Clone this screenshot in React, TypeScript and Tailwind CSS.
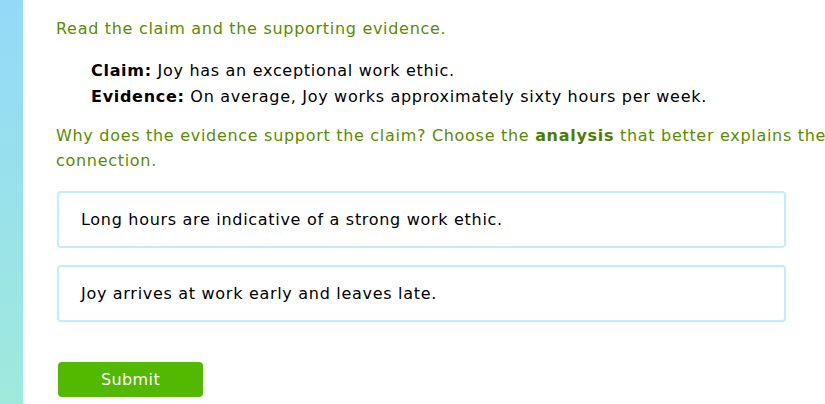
const green = "text-[#5b8c00]";

function Choice({ text }: { text: string }) {
  return (
    <div className="flex h-[57px] items-center rounded-[4px] border-2 border-[#c2eefc] bg-white pl-[22px]">
      <span className="text-[16px] text-black">{text}</span>
    </div>
  );
}

export default function App() {
  return (
    <div className="flex h-[404px] w-[825px] overflow-hidden bg-white font-['DejaVu_Sans',Verdana,sans-serif] leading-[25px] tracking-[0.7px]">
      <div className="w-[23px] shrink-0 bg-gradient-to-b from-[#94d9f8] to-[#9fe9dc]" />
      <div className="flex w-[860px] shrink-0 flex-col pl-[33px] pt-[16px] text-[16px]">
        <p className={green}>Read the claim and the supporting evidence.</p>

        <div className="mt-[17px] pl-[35px] text-black">
          <p>
            <span className="font-bold">Claim:</span> Joy has an exceptional work ethic.
          </p>
          <p className="mt-[1px]">
            <span className="font-bold">Evidence:</span> On average, Joy works approximately sixty hours
            per week.
          </p>
        </div>

        <p className={`mt-[14px] w-[800px] ${green}`}>
          Why does the evidence support the claim? Choose the{" "}
          <span className="font-bold text-[#4c7d00]">analysis</span> that better explains the
          connection.
        </p>

        <div className="mt-[18px] flex w-[730px] flex-col gap-[17px] pl-[1px]">
          <Choice text="Long hours are indicative of a strong work ethic." />
          <Choice text="Joy arrives at work early and leaves late." />
        </div>

        <button className="ml-[2px] mt-[40px] h-[35px] w-[145px] rounded-[4px] bg-[#53b800] text-[16px] tracking-[0.4px] text-white">
          Submit
        </button>
      </div>
    </div>
  );
}
